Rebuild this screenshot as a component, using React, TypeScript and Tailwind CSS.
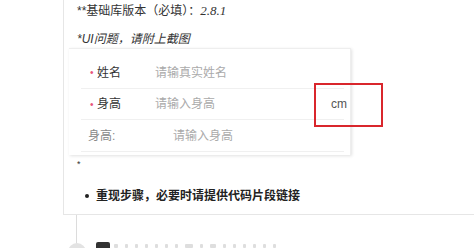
import React from "react";

const cjk = { fontFamily: '"Liberation Sans", "Noto Sans CJK SC", sans-serif' };

export default function App() {
  return (
    <div className="relative h-[248px] w-[474px] overflow-hidden bg-white text-[#333]" style={cjk}>
      <div className="ml-[63px] mt-[-20px] w-[440px] border border-[#e6e6e6] bg-white pl-[13px]">
        <div className="pt-[20px] text-[12px] leading-[20px] text-[#333]">
          **基础库版本（必填）：<span className="text-[13px] italic" style={{ fontFamily: '"Liberation Serif", serif' }}>2.8.1</span>
        </div>
        <div className="mt-[8px] text-[12px] italic leading-[20px] text-[#333]">*UI问题，请附上截图</div>
        <div className="mt-[-1px] ml-[-8px] w-[282px] bg-white pt-[8px] pb-[3px] shadow-[1px_1px_3px_rgba(0,0,0,0.12)] border-t border-r border-[#eeeeee]">
          <div className="ml-[12px] mr-[6px] flex h-[32px] items-center border-b border-[#f0f0f0] text-[12px]">
            <span className="ml-[9px] w-[7px] text-[10px] text-[#e8557a]">•</span>
            <span className="w-[58px] text-[#333]">姓名</span>
            <span className="text-[#aaa]">请输真实姓名</span>
          </div>
          <div className="ml-[12px] mr-[6px] flex h-[31px] items-center border-b border-[#f0f0f0] text-[12px]">
            <span className="ml-[9px] w-[7px] text-[10px] text-[#e8557a]">•</span>
            <span className="w-[58px] text-[#333]">身高</span>
            <span className="flex-1 text-[#aaa]">请输入身高</span>
            <span className="mr-[-3px] text-[12px] text-[#555]">cm</span>
          </div>
          <div className="ml-[12px] mr-[6px] flex h-[32px] items-center border-b border-[#f0f0f0] text-[12px]">
            <span className="ml-[7px] w-[85px] text-[#888]">身高:</span>
            <span className="text-[#aaa]">请输入身高</span>
          </div>
        </div>
        <div className="mt-[3px] h-[12px] text-[9px] leading-[12px] text-[#333]">*</div>
        <div className="mt-[14px] flex h-[24px] items-center text-[12px] font-bold text-[#222]">
          <span className="ml-[8px] mr-[7px] h-[4px] w-[4px] rounded-full bg-[#222]" />
          重现步骤，必要时请提供代码片段链接
        </div>
        <div className="h-[6px]" />
      </div>
      <div className="ml-[76px] h-[29px] w-px bg-[#dcdcdc]" />
      <div className="absolute left-[68px] top-[243px] h-[18px] w-[18px] rounded-full bg-[#e3e3e3]" />
      <div className="absolute left-[96px] top-[242px] h-[10px] w-[14px] rounded-[2px] bg-[#333]" />
      <div className="absolute left-[114px] top-[244px] flex gap-[7px]">
        {[4, 3, 3, 3, 3, 3, 3, 8, 3, 6, 3, 3, 3, 3, 3, 3].map((w, i) => (
          <span key={i} className="h-[4px] rounded-[1px] bg-[#dedede]" style={{ width: w }} />
        ))}
      </div>
      <div className="absolute left-[314px] top-[83px] h-[44px] w-[69px] border-2 border-[#d9262c]" />
    </div>
  );
}
